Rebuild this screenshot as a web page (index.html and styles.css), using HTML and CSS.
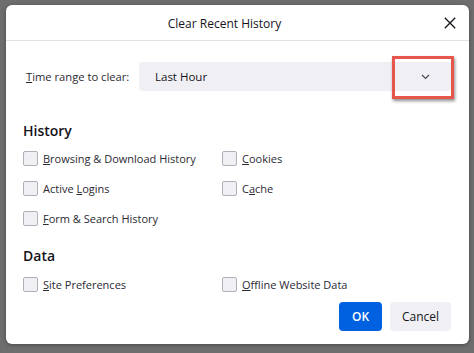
FILE: index.html
```html
<!DOCTYPE html>
<html lang="en">
  <head>
    <meta charset="UTF-8" />
    <title>Clear Recent History</title>
    <link rel="stylesheet" href="styles.css">
  </head>
  <body>
    <div class="dialog">
      <div class="dialog-header">
        <span class="dialog-title">Clear Recent History</span>
        <button class="close-btn" aria-label="Close">
          <svg width="12" height="12" viewBox="0 0 12 12">
            <path d="M0.8 0.8 L11.2 11.2 M11.2 0.8 L0.8 11.2" stroke="#15141a" stroke-width="1.3" fill="none" />
          </svg>
        </button>
      </div>

      <div class="dialog-body">
        <div class="range-row">
          <label class="range-label"><u>T</u>ime range to clear:</label>
          <div class="select">
            <span>Last Hour</span>
            <svg class="chevron" width="9" height="6" viewBox="0 0 9 6">
              <path d="M1 1 L4.5 4.5 L8 1" stroke="#4a4a55" stroke-width="1.2" fill="none" />
            </svg>
            <div class="highlight"></div>
          </div>
        </div>

        <h3 class="section-title">History</h3>
        <div class="checks">
          <label class="check"><span class="box"></span><span><u>B</u>rowsing &amp; Download History</span></label>
          <label class="check"><span class="box"></span><span><u>C</u>ookies</span></label>
          <label class="check"><span class="box"></span><span>Active <u>L</u>ogins</span></label>
          <label class="check"><span class="box"></span><span>C<u>a</u>che</span></label>
          <label class="check"><span class="box"></span><span><u>F</u>orm &amp; Search History</span></label>
        </div>

        <h3 class="section-title data-title">Data</h3>
        <div class="checks">
          <label class="check"><span class="box"></span><span><u>S</u>ite Preferences</span></label>
          <label class="check"><span class="box"></span><span><u>O</u>ffline Website Data</span></label>
        </div>

        <div class="buttons">
          <button class="btn btn-primary">OK</button>
          <button class="btn btn-cancel">Cancel</button>
        </div>
      </div>
    </div>
  </body>
</html>
```

FILE: styles.css
```css
body {
  margin: 0;
  background: #6e6e6e;
  font-family: "Open Sans", "Noto Sans", sans-serif;
  color: #15141a;
  height: 353px;
  overflow: hidden;
}

.dialog {
  margin: 5px 0 0 6px;
  width: 463px;
  height: 339px;
  background: #fff;
  border-radius: 6px;
  box-shadow: 0 1px 4px rgba(0, 0, 0, 0.35);
  box-sizing: border-box;
}

.dialog-header {
  height: 36px;
  border-bottom: 1px solid #e0e0e6;
  box-sizing: border-box;
  display: flex;
  align-items: center;
  justify-content: center;
  padding-right: 26px;
  position: relative;
}

.dialog-title {
  font-size: 12px;
  padding-top: 2px;
}

.close-btn {
  position: absolute;
  right: 13px;
  top: 12px;
  border: none;
  background: none;
  padding: 0;
  width: 12px;
  height: 12px;
  display: flex;
}

.dialog-body {
  padding: 21px 17px 0 17px;
}

.range-row {
  display: flex;
  align-items: center;
}

.range-label {
  font-size: 11.2px;
  width: 113px;
  padding-left: 3px;
  color: #2b2a33;
}

.select {
  position: relative;
  width: 313px;
  height: 29px;
  background: #f0f0f4;
  border-radius: 4px;
  display: flex;
  align-items: center;
  justify-content: space-between;
  padding: 0 22px 0 16px;
  box-sizing: border-box;
  font-size: 11.5px;
}

.highlight {
  position: absolute;
  left: 253px;
  top: -6px;
  width: 62px;
  height: 43px;
  border: 3px solid #e6564c;
  box-sizing: border-box;
  box-shadow: 1px 2px 3px rgba(0, 0, 0, 0.45);
}

.section-title {
  margin: 30px 0 10px 0;
  font-size: 14px;
  font-weight: 600;
  line-height: 20px;
}

.data-title {
  margin-top: 5px;
  margin-bottom: 11px;
}

.checks {
  display: grid;
  grid-template-columns: 199px auto;
  grid-auto-rows: 30px;
}

.check {
  display: flex;
  align-items: center;
  font-size: 11px;
  color: #2b2a33;
  height: 14px;
}

.box {
  width: 13px;
  height: 13px;
  border: 1px solid #b0b0b8;
  border-radius: 2px;
  background: #f0f0f4;
  margin-right: 5px;
  flex-shrink: 0;
}

.buttons {
  display: flex;
  justify-content: flex-end;
  gap: 8px;
  margin-top: -5px;
  padding-right: 1px;
}

.btn {
  height: 29px;
  padding: 0;
  border: none;
  border-radius: 4px;
  background: #f0f0f4;
  font-family: "Open Sans", "Noto Sans", sans-serif;
  font-size: 12px;
  color: #15141a;
}

.btn-primary {
  width: 43px;
  background: #0061e0;
  color: #fff;
  font-weight: 600;
}

.btn-cancel {
  width: 61px;
}
```
